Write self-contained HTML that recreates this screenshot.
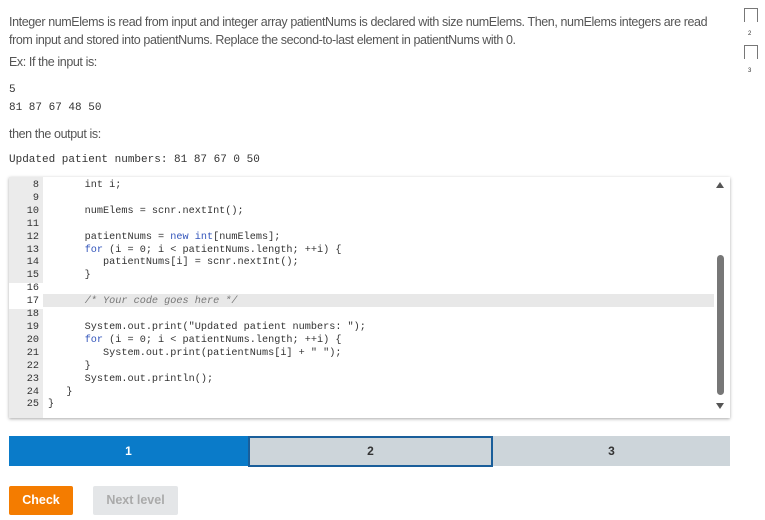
<!DOCTYPE html><html><head><style>
body{margin:0;width:765px;height:520px;background:#fff;font-family:"Liberation Sans",sans-serif;position:relative;overflow:hidden}
.p{position:absolute;left:9px;font-size:12.5px;color:#555;letter-spacing:-0.4px}
.m{position:absolute;left:9px;font-family:"Liberation Mono",monospace;font-size:11px;color:#333}
#ed{position:absolute;left:9px;top:177px;width:721px;height:241px;background:#fff;box-shadow:0 1px 3px #aaa}
#gut{position:absolute;left:0;top:0;width:34px;height:241px;background:#ebebeb}
.ln{position:absolute;font-family:"Liberation Mono",monospace;font-size:10.2px;line-height:12.9px;white-space:pre;color:#333}
.kw{color:#3355bb}
.cm{color:#777;font-style:italic}
</style></head><body>
<div class="p" style="top:13px;line-height:18px;width:710px">Integer numElems is read from input and integer array patientNums is declared with size numElems. Then, numElems integers are read from input and stored into patientNums. Replace the second-to-last element in patientNums with 0.</div>
<div class="p" style="top:55px">Ex: If the input is:</div>
<div class="m" style="top:84px">5</div>
<div class="m" style="top:102px">81 87 67 48 50</div>
<div class="p" style="top:127px">then the output is:</div>
<div class="m" style="top:154px">Updated patient numbers: 81 87 67 0 50</div>
<div id="ed"><div id="gut"></div>
<div style="position:absolute;left:0;top:106px;width:34px;height:26px;background:#fff"></div>
<div style="position:absolute;left:34px;top:117px;width:671px;height:13px;background:#e8e8e8"></div>
<div class="ln" style="left:8px;top:3px;text-align:right;width:22px"> 8
 9
10
11
12
13
14
15
16
17
18
19
20
21
22
23
24
25</div>
<div class="ln" style="left:39px;top:3px">      int i;

      numElems = scnr.nextInt();

      patientNums = <span class="kw">new int</span>[numElems];
      <span class="kw">for</span> (i = 0; i &lt; patientNums.length; ++i) {
         patientNums[i] = scnr.nextInt();
      }

      <span class="cm">/* Your code goes here */</span>

      System.out.print("Updated patient numbers: ");
      <span class="kw">for</span> (i = 0; i &lt; patientNums.length; ++i) {
         System.out.print(patientNums[i] + " ");
      }
      System.out.println();
   }
}</div>
<div style="position:absolute;left:707px;top:5px;width:0;height:0;border:4px solid transparent;border-bottom:6px solid #555;border-top:0"></div>
<div style="position:absolute;left:708px;top:78px;width:7px;height:140px;background:#777;border-radius:4px"></div>
<div style="position:absolute;left:707px;top:226px;width:0;height:0;border:4px solid transparent;border-top:6px solid #555;border-bottom:0"></div>
</div>
<div style="position:absolute;left:9px;top:436px;width:239px;height:30px;background:#0a7bc9;color:#fff;font-size:12px;font-weight:bold;text-align:center;line-height:30px">1</div>
<div style="position:absolute;left:248px;top:436px;width:241px;height:27px;background:#cdd5da;border:2px solid #1a5e9a;font-size:12px;font-weight:bold;text-align:center;line-height:27px;color:#333">2</div>
<div style="position:absolute;left:493px;top:436px;width:237px;height:30px;background:#cdd5da;font-size:12px;font-weight:bold;text-align:center;line-height:30px;color:#333">3</div>
<div style="position:absolute;left:9px;top:486px;width:64px;height:29px;background:#f47c00;color:#fff;font-size:12.5px;font-weight:bold;text-align:center;line-height:29px;border-radius:2px">Check</div>
<div style="position:absolute;left:93px;top:486px;width:85px;height:29px;background:#e4e6e8;color:#aaa;font-size:12.5px;font-weight:bold;text-align:center;line-height:29px;border-radius:2px">Next level</div>
<div style="position:absolute;left:744px;top:8px;width:12px;height:13px;border:1px solid #777;border-bottom:none"></div>
<div style="position:absolute;left:748px;top:31px;font-size:6px;color:#333">2</div>
<div style="position:absolute;left:744px;top:45px;width:12px;height:13px;border:1px solid #777;border-bottom:none"></div>
<div style="position:absolute;left:748px;top:68px;font-size:6px;color:#333">3</div>
</body></html>
